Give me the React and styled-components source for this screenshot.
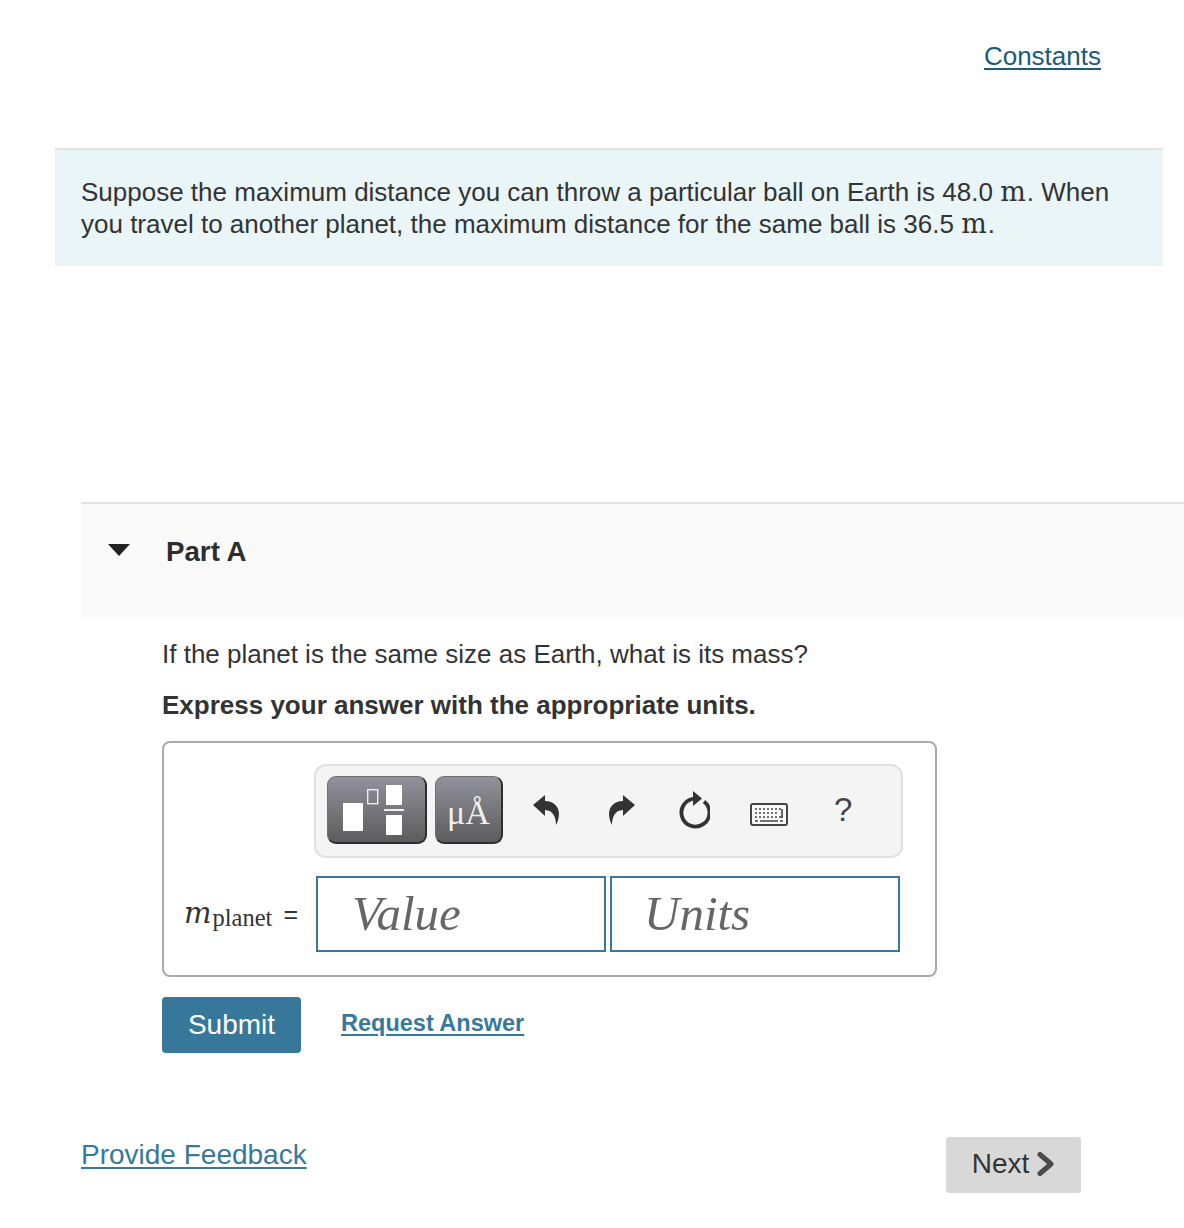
import React from "react";
import styled, { createGlobalStyle } from "styled-components";

const Global = createGlobalStyle`
  html, body { margin: 0; padding: 0; background: #fff; }
  body { font-family: "Liberation Sans", Arial, sans-serif; color: #333; }
`;
const Page = styled.div`
  width: 1184px; height: 1228px; overflow: hidden; display: flex; flex-direction: column;
`;
const TopBar = styled.div`
  height: 148px; box-sizing: border-box; padding: 39px 83px 0 0; display: flex; justify-content: flex-end;
`;
const ConstantsLink = styled.a`
  font-size: 26px; line-height: 34px; color: #1d5a78; text-decoration: underline; text-underline-offset: 3px;
`;
const Intro = styled.div`
  margin-left: 55px; width: 1108px; height: 118px; box-sizing: border-box;
  background: #e9f5f7; border-top: 2px solid #dfe3e4; padding: 26px 26px 0;
  font-size: 26px; line-height: 32px; color: #333;
`;
const Unit = styled.span`
  font-family: "DejaVu Serif", serif; font-size: 27px; line-height: 0; font-weight: 400; letter-spacing: 1px;
`;
const PartHeader = styled.div`
  margin: 236px 0 0 81px; height: 115px; box-sizing: border-box; background: #f9f9f9;
  border-top: 2px solid #e2e2e2; display: flex; padding: 0 0 0 27px; align-items: flex-start;
`;
const PartCaret = styled.svg`
  width: 22px; height: 12px; margin-top: 40px; flex: none;
`;
const PartTitle = styled.h2`
  margin: 30px 0 0 36px; font-size: 27.7px; line-height: 36px; font-weight: 700; color: #2d2d2d;
`;
const Body = styled.div`
  margin-left: 162px; width: 775px; display: flex; flex-direction: column;
`;
const Question = styled.p`
  margin: 20px 0 0; font-size: 26px; line-height: 34px; color: #333;
`;
const Instruction = styled.p`
  margin: 17px 0 0; font-size: 26px; line-height: 34px; font-weight: 700; color: #333;
`;
const AnswerBox = styled.div`
  margin-top: 19px; height: 236px; box-sizing: border-box; border: 2px solid #aaa; border-radius: 8px;
  padding: 21px 34px 0 0; display: flex; flex-direction: column; align-items: flex-end;
`;
const Toolbar = styled.div`
  width: 589px; height: 94px; box-sizing: border-box; margin-right: -2px; border: 2px solid #e0e0e0; border-radius: 12px;
  background: #f4f4f4; display: flex; align-items: flex-start; padding: 10px 0 0 11px;
`;
const DarkButton = styled.button`
  width: ${(p) => p.$w}px; height: 68px; margin-right: 8px; padding: 0; box-sizing: border-box;
  border: 1px solid #6f6f6f; border-right: 2px solid #2e2e2e; border-bottom: 2px solid #2e2e2e; border-radius: 9px;
  background: linear-gradient(#92919a, #5c5c5e); display: flex; align-items: center; justify-content: center;
`;
const TemplateIcon = styled.svg`
  width: 61px; height: 50px; margin-right: 6px; flex: none;
`;
const UnitsGlyph = styled.span`
  font-family: "Liberation Serif", serif; font-size: 34px; line-height: 40px; color: #f0f0f0; margin-top: 7px;
`;
const ToolIcon = styled.span`
  position: absolute; left: ${(p) => p.$x}px; top: ${(p) => p.$y}px; display: flex;
`;
const ToolArea = styled.div`
  position: relative; flex: 1; height: 100%;
`;
const Help = styled.span`
  position: absolute; left: ${(p) => p.$x}px; top: 15px; font-size: 33px; line-height: 38px; color: #444;
`;
const InputRow = styled.div`
  margin-top: 18px; display: flex; align-items: center; align-self: stretch; justify-content: flex-end; margin-right: 1px;
`;
const MathLabel = styled.span`
  font-family: "Liberation Serif", serif; color: #333; font-size: 24px; margin-right: 18px; display: flex; align-items: baseline; white-space: nowrap; margin-top: -3px;
`;
const MathVar = styled.i`font-family: "DejaVu Serif", serif; font-size: 29px;`;
const MathSub = styled.span`font-size: 24.5px; position: relative; top: 3px; margin-right: 11px; margin-left: 1px;`;
const MathEq = styled.span`font-family: "Liberation Sans", sans-serif; font-size: 25px; font-weight: 400;`;
const Field = styled.div`
  width: 290px; height: 76px; box-sizing: border-box; border: 2px solid #37799b; background: #fff;
  padding: 0 0 2px 34px; display: flex; align-items: center;
  font-family: "Liberation Serif", serif; font-style: italic; font-size: 49px; color: #666;
  & + & { margin-left: 4px; padding-left: 32px; }
`;
const Actions = styled.div`
  margin-top: 20px; display: flex; align-items: flex-start;
`;
const Submit = styled.button`
  width: 139px; height: 56px; border: 0; border-radius: 4px; background: #37789a; color: #fff; padding: 0;
  font: 400 28px "Liberation Sans", sans-serif;
`;
const RequestLink = styled.a`
  margin: 10px 0 0 40px; font-size: 23.5px; line-height: 32px; font-weight: 700; color: #37799b; text-decoration: underline; text-underline-offset: 3px;
`;
const Footer = styled.div`
  margin: 84px 103px 0 81px; display: flex; justify-content: space-between; align-items: flex-start;
`;
const Feedback = styled.a`
  font-size: 28px; line-height: 36px; color: #37799b; text-decoration: underline; text-underline-offset: 3px;
`;
const NextButton = styled.button`
  width: 135px; height: 56px; border: 0; border-radius: 3px; background: #d8d8d8; color: #333; padding: 0 0 2px;
  font: 400 28px "Liberation Sans", sans-serif; display: flex; align-items: center; justify-content: center; gap: 8px;
`;

const Undo = ({ flip }) => (
  <svg width="28" height="32" viewBox="0 0 28 32" style={flip ? { transform: "scaleX(-1)" } : undefined}>
    <path d="M1 11 L13 1 L13 7 C22 7 27 13 27 20 C27 25 25 29 24 31 C24 25 22 16 13 16 L13 22 Z" fill="#333" />
  </svg>
);
const Redo = () => (
  <svg width="34" height="38" viewBox="0 0 34 38">
    <path d="M20 7.6 A14 14 0 1 0 28 10.5" fill="none" stroke="#333" strokeWidth="3.8" />
    <path d="M17 0 L26 7.5 L17 15 Z" fill="#333" />
  </svg>
);
const Keyboard = () => (
  <svg width="38" height="23" viewBox="0 0 38 23">
    <rect x="1" y="1" width="36" height="21" rx="2" fill="#f8f8f8" stroke="#444" strokeWidth="2" />
    <path d="M5 6h2M9 6h2M13 6h2M17 6h2M21 6h2M25 6h2M29 6h2M5 10h2M9 10h2M13 10h2M17 10h2M21 10h2M25 10h2M5 14h2M9 14h2M13 14h2M17 14h2M21 14h2M25 14h2M5 18h3M10 18h18M30 18h3M32 6v9M29 14h4" stroke="#444" strokeWidth="1.6" />
  </svg>
);
const Templates = () => (
  <TemplateIcon viewBox="0 0 61 50">
    <rect x="0" y="18" width="20" height="28" fill="#fff" />
    <rect x="24.7" y="4.7" width="10" height="14" fill="none" stroke="#eee" strokeWidth="1.4" />
    <rect x="43" y="0" width="16" height="20" fill="#fff" />
    <rect x="41" y="24" width="20" height="2" fill="#eee" />
    <rect x="43" y="30" width="16" height="20" fill="#fff" />
  </TemplateIcon>
);

export default function App() {
  return (
    <Page>
      <Global />
      <TopBar><ConstantsLink href="#">Constants</ConstantsLink></TopBar>
      <Intro>
        Suppose the maximum distance you can throw a particular ball on Earth is 48.0 <Unit>m</Unit>. When you travel to another planet, the maximum distance for the same ball is 36.5 <Unit>m</Unit>.
      </Intro>
      <PartHeader>
        <PartCaret viewBox="0 0 22 12"><path d="M0 0H22L11 12Z" fill="#222" /></PartCaret>
        <PartTitle>Part A</PartTitle>
      </PartHeader>
      <Body>
        <Question>If the planet is the same size as Earth, what is its mass?</Question>
        <Instruction>Express your answer with the appropriate units.</Instruction>
        <AnswerBox>
          <Toolbar>
            <DarkButton $w={100}><Templates /></DarkButton>
            <DarkButton $w={68}><UnitsGlyph>μÅ</UnitsGlyph></DarkButton>
            <ToolArea>
              <ToolIcon $x={21} $y={18}><Undo /></ToolIcon>
              <ToolIcon $x={97} $y={18}><Undo flip /></ToolIcon>
              <ToolIcon $x={165} $y={15}><Redo /></ToolIcon>
              <ToolIcon $x={239} $y={27}><Keyboard /></ToolIcon>
              <Help $x={323}>?</Help>
            </ToolArea>
          </Toolbar>
          <InputRow>
            <MathLabel><MathVar>m</MathVar><MathSub>planet</MathSub><MathEq>=</MathEq></MathLabel>
            <Field>Value</Field>
            <Field>Units</Field>
          </InputRow>
        </AnswerBox>
        <Actions>
          <Submit>Submit</Submit>
          <RequestLink href="#">Request Answer</RequestLink>
        </Actions>
      </Body>
      <Footer>
        <Feedback href="#">Provide Feedback</Feedback>
        <NextButton>Next
          <svg width="18" height="26" viewBox="0 0 18 26"><path d="M3 3.5 L14 13 L3 22.5" fill="none" stroke="#4a4a4a" strokeWidth="5" strokeLinejoin="round" strokeLinecap="round" /></svg>
        </NextButton>
      </Footer>
    </Page>
  );
}
